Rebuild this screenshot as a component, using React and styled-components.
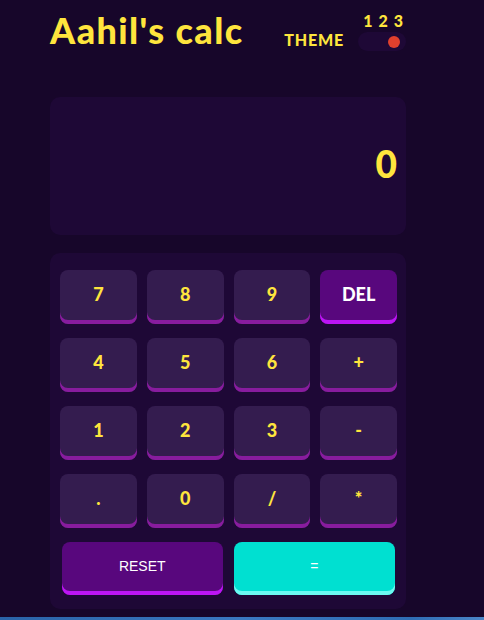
import React from "react";
import styled, { createGlobalStyle } from "styled-components";

const GlobalStyle = createGlobalStyle`
  html, body {
    margin: 0;
    padding: 0;
    background: #17062a;
  }
  body {
    font-family: Lato, "Open Sans", sans-serif;
    min-height: 620px;
    overflow: hidden;
  }
`;

const Page = styled.div`
  height: 617px;
  display: flex;
  flex-direction: column;
  padding-left: 50px;
  box-sizing: border-box;
`;

const Taskbar = styled.div`
  height: 3px;
  background: linear-gradient(90deg, #2a63a8 0%, #3a78c0 50%, #2f6db4 85%, #4c86c8 100%);
`;

const Calc = styled.div`
  width: 356px;
  display: flex;
  flex-direction: column;
`;

const Header = styled.header`
  height: 97px;
  display: flex;
  align-items: flex-start;
  padding-top: 10px;
  box-sizing: border-box;
`;

const Title = styled.h1`
  margin: 0;
  font-family: Lato, sans-serif;
  font-weight: 900;
  font-size: 36px;
  line-height: 40px;
  color: #ffe53d;
  letter-spacing: 1.4px;
`;

const ThemeGroup = styled.div`
  margin-left: auto;
  display: flex;
  align-items: flex-end;
  gap: 14px;
  padding-top: 2px;
`;

const ThemeLabel = styled.span`
  font-weight: 900;
  font-size: 16px;
  color: #ffe53d;
  letter-spacing: 0.8px;
  line-height: 20px;
  margin-bottom: 1px;
`;

const Switcher = styled.div`
  display: flex;
  flex-direction: column;
  align-items: flex-end;
  gap: 2px;
`;

const Numbers = styled.div`
  display: flex;
  gap: 6px;
  padding-right: 3px;
  font-weight: 900;
  font-size: 16px;
  line-height: 18px;
  color: #ffe53d;
`;

const Track = styled.div`
  width: 48px;
  height: 19px;
  border-radius: 10px;
  background: #1e0836;
  display: flex;
  align-items: center;
  justify-content: ${(p) => ["flex-start", "center", "flex-end"][p.$pos]};
  padding: 0 6px;
  box-sizing: border-box;
`;

const Knob = styled.span`
  width: 12px;
  height: 12px;
  border-radius: 50%;
  background: #e0402d;
`;

const Screen = styled.div`
  height: 138px;
  background: #1e0836;
  border-radius: 10px;
  display: flex;
  align-items: center;
  justify-content: flex-end;
  padding: 0 9px 6px 0;
  box-sizing: border-box;
  font-weight: 900;
  font-size: 37px;
  color: #ffe53d;
`;

const Keypad = styled.div`
  margin-top: 18px;
  background: #1e0836;
  border-radius: 10px;
  padding: 17px 9px 14px 10px;
  display: grid;
  grid-template-columns: repeat(4, 1fr);
  column-gap: 10px;
  row-gap: 14px;
`;

const Key = styled.button`
  height: 54px;
  border: none;
  border-radius: 8px;
  background: ${(p) => p.$bg};
  box-shadow: inset 0 -4px 0 ${(p) => p.$edge};
  color: ${(p) => p.$fg};
  font-family: ${(p) => (p.$plain ? '"Liberation Sans", Arial, sans-serif' : "Lato, sans-serif")};
  font-weight: ${(p) => (p.$plain ? 400 : 900)};
  font-size: ${(p) => (p.$plain ? "14px" : "18px")};
  padding: 0 0 6px;
  cursor: pointer;
  grid-column: span ${(p) => p.$span || 1};
`;

const WideKey = styled(Key)`
  height: 53px;
  margin: ${(p) => (p.$first ? "0 1px 0 2px" : "0 2px 0 0")};
`;

const tones = {
  num: { $bg: "#341c4f", $edge: "#881c9e", $fg: "#ffe53d" },
  del: { $bg: "#58077d", $edge: "#bc15f4", $fg: "#ffffff" },
  eq: { $bg: "#00e0d1", $edge: "#6cf9f1", $fg: "#ffffff" },
};

const keys = ["7", "8", "9", "DEL", "4", "5", "6", "+", "1", "2", "3", "-", ".", "0", "/", "*"];

export default function App() {
  return (
    <>
      <GlobalStyle />
      <Page>
        <Calc>
          <Header>
            <Title>Aahil's calc</Title>
            <ThemeGroup>
              <ThemeLabel>THEME</ThemeLabel>
              <Switcher>
                <Numbers>
                  <span>1</span>
                  <span>2</span>
                  <span>3</span>
                </Numbers>
                <Track $pos={2}>
                  <Knob />
                </Track>
              </Switcher>
            </ThemeGroup>
          </Header>
          <Screen>0</Screen>
          <Keypad>
            {keys.map((k) => (
              <Key key={k} {...(k === "DEL" ? tones.del : tones.num)}>
                {k}
              </Key>
            ))}
            <WideKey $span={2} $plain $first {...tones.del}>
              RESET
            </WideKey>
            <WideKey $span={2} $plain {...tones.eq}>
              =
            </WideKey>
          </Keypad>
        </Calc>
      </Page>
      <Taskbar />
    </>
  );
}
